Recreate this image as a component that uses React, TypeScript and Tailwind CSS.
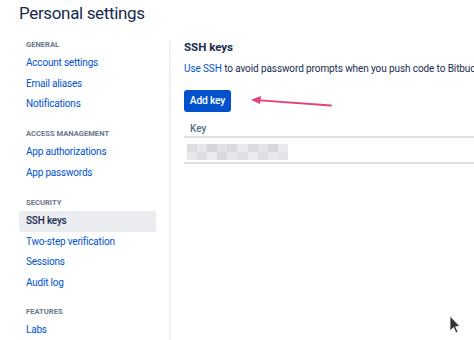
import React from "react";

const groups = [
  {
    title: "GENERAL",
    items: ["Account settings", "Email aliases", "Notifications"],
  },
  {
    title: "ACCESS MANAGEMENT",
    items: ["App authorizations", "App passwords"],
  },
  {
    title: "SECURITY",
    items: ["SSH keys", "Two-step verification", "Sessions", "Audit log"],
  },
  {
    title: "FEATURES",
    items: ["Labs"],
  },
];

// blurred key preview, two rows of pixel blocks
const blurTop = ["#dcdde0", "#e6e7ea", "#d4d6da", "#e1e2e5", "#d9dbde", "#e8e9eb", "#dadcdf", "#e4e5e8", "#d6d8db", "#e9eaec"];
const blurBottom = ["#e7e8ea", "#dcdee1", "#eaebed", "#d8dadd", "#e5e6e8", "#dfe0e3", "#ebeced", "#dddfe2", "#e8e9eb", "#e2e3e6"];

export default function App() {
  return (
    <div className="relative w-[474px] h-[340px] overflow-hidden bg-white font-['Roboto','Liberation_Sans',sans-serif] text-[#172b4d]">
      <h1 className="pl-[19px] h-[26px] text-[17px] tracking-[-0.35px] leading-[26px] font-normal text-[#172b4d]">Personal settings</h1>

      <div className="flex mt-[13px]">
        {/* sidebar */}
        <nav className="w-[169px] shrink-0 pl-[19px] pr-[13px]">
          {groups.map((g, gi) => (
            <div key={g.title} className={gi === 0 ? "" : gi === 1 ? "mt-[13.5px]" : gi === 2 ? "mt-[14px]" : "mt-[13px]"}>
              <div className="pl-[7px] h-[12px] leading-[12px] text-[7.6px] font-bold text-[#6b778c]">{g.title}</div>
              <div className="mt-[2px]">
                {g.items.map((item) =>
                  item === "SSH keys" ? (
                    <div key={item} className="pl-[7px] h-[20.5px] leading-[20.5px] text-[10px] tracking-[-0.2px] font-medium bg-[#ebecf0] rounded-[2px] text-[#172b4d]">
                      {item}
                    </div>
                  ) : (
                    <div key={item} className="pl-[7px] h-[20.5px] leading-[20.5px] text-[10px] tracking-[-0.2px] text-[#0052cc]">
                      {item}
                    </div>
                  )
                )}
              </div>
            </div>
          ))}
        </nav>

        {/* main */}
        <main className="flex-1 border-l-2 border-[#f0f1f3] pl-[13px] mt-[1px] min-h-[300px] overflow-hidden">
          <h2 className="text-[11.5px] leading-[14px] font-bold text-[#172b4d]">SSH keys</h2>
          <p className="mt-[7px] text-[10px] tracking-[-0.1px] leading-[16px] whitespace-nowrap text-[#172b4d]">
            <span className="text-[#0052cc]">Use SSH</span> to avoid password prompts when you push code to Bitbucket
          </p>
          <button className="mt-[13px] w-[47px] h-[22px] rounded-[3px] bg-[#0052cc] text-white text-[10.3px] tracking-[-0.2px] font-medium flex items-center justify-center">
            Add key
          </button>
          <div className="mt-[9px] pl-[6px] h-[17px] leading-[15px] border-b-2 border-[#dfe1e6] text-[10px] font-medium text-[#5e6c84]">
            Key
          </div>
          <div className="pt-[6px] pb-[2px] pl-[3px] border-b-2 border-[#dfe1e6]">
            <div className="w-[101px] h-[16px] flex flex-col">
              <div className="flex h-[8px]">
                {blurTop.map((c, i) => (
                  <div key={i} className="flex-1" style={{ background: c }} />
                ))}
              </div>
              <div className="flex h-[8px]">
                {blurBottom.map((c, i) => (
                  <div key={i} className="flex-1" style={{ background: c }} />
                ))}
              </div>
            </div>
          </div>
        </main>
      </div>

      {/* annotation arrow */}
      <svg className="absolute left-[245px] top-[92px]" width="92" height="20" viewBox="0 0 92 20">
        <line x1="86" y1="13.5" x2="12" y2="8.2" stroke="#e6407c" strokeWidth="1.8" strokeLinecap="round" />
        <path d="M6 7.8 L16 4 L15 12 Z" fill="#e6407c" />
      </svg>

      {/* mouse cursor */}
      <svg className="absolute left-[448px] top-[315px]" width="14" height="20" viewBox="0 0 14 20">
        <path d="M2 1 L2 16 L5.5 12.5 L8 18 L10 17 L7.6 11.6 L12 11.6 Z" fill="#333" stroke="#fff" strokeWidth="0.8" />
      </svg>
    </div>
  );
}
